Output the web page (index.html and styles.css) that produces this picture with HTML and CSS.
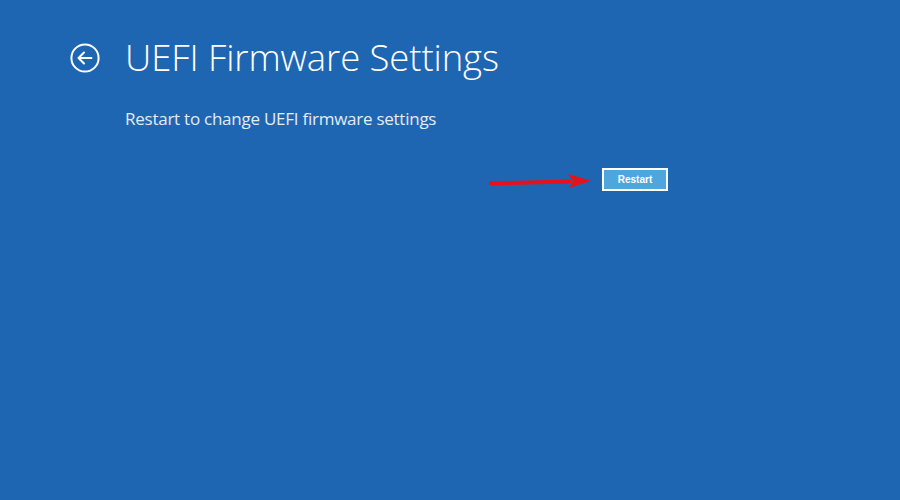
FILE: index.html
```html
<!DOCTYPE html>
<html>
<head>
<meta charset="utf-8">
<link rel="stylesheet" href="styles.css">
</head>
<body>
<div class="page">
  <div class="header">
    <svg class="back" width="30" height="30" viewBox="0 0 30 30">
      <circle cx="15" cy="15" r="13.6" fill="none" stroke="#fff" stroke-width="2"/>
      <path d="M8.5 15 H21.5 M14 9.5 L8.5 15 L14 20.5" fill="none" stroke="#fff" stroke-width="2" stroke-linecap="round" stroke-linejoin="round"/>
    </svg>
    <h1 class="title">UEFI Firmware Settings</h1>
  </div>
  <p class="subtitle">Restart to change UEFI firmware settings</p>
  <div class="action">
    <div class="pointer">
      <svg width="104" height="18" viewBox="0 0 104 18">
        <path d="M0 10.5 L82 8.6 L82 12.4 L0 14.5 Z" fill="#e8101a"/>
        <path d="M79 3 L102 9.8 L80 17 L84 10.3 Z" fill="#e8101a"/>
      </svg>
    </div>
    <button class="restart">Restart</button>
  </div>
</div>
</body>
</html>
```
FILE: styles.css
```css
html, body {
  margin: 0;
  padding: 0;
  background: #1f66b2;
  width: 900px;
  height: 500px;
  overflow: hidden;
}
.page {
  padding: 27px 0 0 70px;
  font-family: "Segoe UI", "Open Sans", "Liberation Sans", sans-serif;
  color: #fff;
}
.header {
  display: flex;
  align-items: center;
  gap: 25px;
}
.back {
  display: block;
  margin-top: 1px;
}
.title {
  margin: 0;
  font-weight: 300;
  font-size: 36.5px;
  line-height: 60px;
  letter-spacing: -0.1px;
}
.subtitle {
  margin: 20px 0 0 55px;
  font-size: 17px;
  line-height: 24px;
  font-weight: 400;
  color: #e3ebf5;
  letter-spacing: -0.25px;
}
.action {
  display: flex;
  align-items: center;
  margin: 37px 0 0 419px;
}
.pointer svg {
  display: block;
  margin-top: 0;
}
.restart {
  margin-left: 9px;
  width: 66px;
  height: 23px;
  border: 2px solid #fff;
  background: #4ea6de;
  color: #fff;
  font-family: "Liberation Sans", Arial, sans-serif;
  font-weight: bold;
  font-size: 10px;
  padding: 0;
}
```
